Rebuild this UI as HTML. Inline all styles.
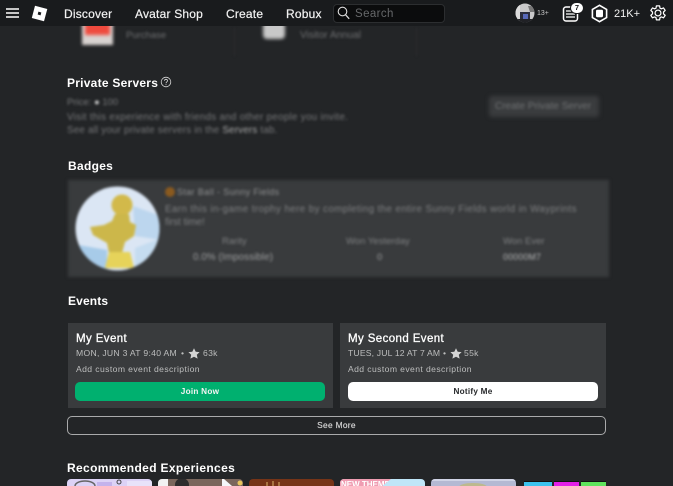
<!DOCTYPE html>
<html><head><meta charset="utf-8">
<style>
html,body{margin:0;padding:0;width:673px;height:486px;overflow:hidden;background:#232527;font-family:"Liberation Sans",sans-serif;color:#fff}
#p{position:relative;width:673px;height:486px;overflow:hidden}
.a{position:absolute;white-space:nowrap}
.nav{top:7px;font-size:12px;line-height:14px;font-weight:400;letter-spacing:.2px;color:#f2f2f2;-webkit-text-stroke:.2px #f2f2f2}
.h{font-weight:700;font-size:12px;line-height:15px;color:#fff}
.b{filter:blur(1.3px);color:#8a8b8c;font-size:9.5px;line-height:11px}
.card{background:#393b3d;top:323px;height:85px}
.t{font-size:11.5px;line-height:14px;letter-spacing:.4px;color:#fff;-webkit-text-stroke:.3px #fff}
.m{font-size:8.6px;line-height:11px;letter-spacing:.3px;color:#bdbebe}
.btn{height:19px;border-radius:5px;text-align:center;font-size:8.2px;line-height:19px;font-weight:700;letter-spacing:.25px}
.th{top:479px;height:7px;overflow:hidden;border-radius:4px 4px 0 0}
</style></head><body><div id="p">

<!-- blurred top cards -->
<div class="a" style="left:82px;top:20px;width:31px;height:25px;background:#d8d2d0;filter:blur(1.6px)"></div>
<div class="a" style="left:85px;top:22px;width:25px;height:13px;background:#ef4a3e;filter:blur(1.8px)"></div>
<div class="a" style="left:263px;top:22px;width:22px;height:17px;background:#c8c8c8;border-radius:4px;filter:blur(1.8px)"></div>
<div class="a b" style="left:126px;top:30px;color:#6e6f71">Purchase</div>
<div class="a b" style="left:300px;top:30px;color:#6e6f71;font-size:10px">Visitor Annual</div>
<div class="a" style="left:234px;top:28px;width:1px;height:28px;background:#2b2d2f;filter:blur(1px)"></div>
<div class="a" style="left:416px;top:28px;width:1px;height:28px;background:#2b2d2f;filter:blur(1px)"></div>

<!-- header -->
<div class="a" style="left:0;top:0;width:673px;height:26px;background:#191b1d"></div>
<svg class="a" style="left:6px;top:8px" width="13" height="10" viewBox="0 0 13 10"><path d="M0 1h13M0 5h13M0 9h13" stroke="#fff" stroke-width="1.6"/></svg>
<svg class="a" style="left:31px;top:5px" width="17" height="17" viewBox="0 0 17 17"><path d="M4 .8 16.300 4 13 16.300.8 13z" fill="#fff"/><rect x="7" y="7" width="3" height="3" fill="#191b1d" transform="rotate(15 8.500 8.500)"/></svg>
<div class="a nav" style="left:64px">Discover</div>
<div class="a nav" style="left:135px">Avatar Shop</div>
<div class="a nav" style="left:226px">Create</div>
<div class="a nav" style="left:286px">Robux</div>
<div class="a" style="left:333px;top:4px;width:110px;height:17px;background:#0b0c0d;border:1px solid #2c2e30;border-radius:4px"></div>
<svg class="a" style="left:337px;top:6px" width="13" height="14" viewBox="0 0 13 14"><circle cx="5.500" cy="5.500" r="4.300" fill="none" stroke="#dcdcdc" stroke-width="1.100"/><path d="M8.600 8.800 12.200 12.800" stroke="#dcdcdc" stroke-width="1.200"/></svg>
<div class="a" style="left:355px;top:7px;font-size:11.500px;line-height:14px;letter-spacing:.4px;color:#66686a">Search</div>
<svg class="a" style="left:515px;top:3px" width="20" height="20" viewBox="0 0 20 20"><defs><clipPath id="c"><circle cx="10" cy="10" r="9.500"/></clipPath></defs><g clip-path="url(#c)"><rect width="20" height="20" fill="#c9c9ca"/><rect x="0" y="0" width="5" height="20" fill="#dcdcdc"/><path d="M5 9h10v11H5z" fill="#2a2c3c"/><rect x="8" y="11" width="5" height="6" fill="#5768b8"/><path d="M13 3h7v6h-5z" fill="#777"/><path d="M3 16h17v4H3z" fill="#202125"/></g></svg>
<div class="a" style="left:537px;top:9px;font-size:7px;line-height:9px;color:#c9c9c9">13+</div>
<svg class="a" style="left:562px;top:5px" width="17" height="17" viewBox="0 0 17 17"><rect x="1.500" y="2" width="14" height="14" rx="2.500" fill="none" stroke="#fff" stroke-width="1.500"/><path d="M4 6h9M4 9h9M4 12h9" stroke="#fff" stroke-width="1.300"/></svg>
<div class="a" style="left:570px;top:2px;width:12px;height:10px;border-radius:6px;background:#fff;color:#191b1d;font-size:7.500px;line-height:10px;font-weight:700;text-align:center;border:1px solid #191b1d">7</div>
<svg class="a" style="left:591px;top:4px" width="17" height="19" viewBox="0 0 17 19"><path d="M8.500 1.300 15.600 5.400v8.200L8.500 17.700 1.400 13.600V5.400z" fill="none" stroke="#fff" stroke-width="1.600"/><rect x="5" y="5.800" width="7" height="7.400" rx="1.200" fill="#fff"/></svg>
<div class="a" style="left:614px;top:7px;font-size:11px;line-height:14px;letter-spacing:0;color:#f2f2f2">21K+</div>
<svg class="a" style="left:649px;top:4px" width="18" height="18" viewBox="0 0 16 16"><path d="M6.600.8h2.800l.4 2 1.200.6 1.900-.8 1.500 2.200-1.500 1.400v1.600l1.500 1.400-1.500 2.200-1.900-.8-1.200.6-.4 2H6.600l-.4-2-1.200-.6-1.900.8-1.500-2.200 1.500-1.400V6.200L1.600 4.800l1.500-2.200 1.900.8 1.200-.6z" fill="none" stroke="#fff" stroke-width="1.100" stroke-linejoin="round" transform="translate(0 .9)"/><circle cx="8" cy="8" r="2.600" fill="none" stroke="#fff" stroke-width="1.100"/></svg>

<!-- private servers -->
<div class="a h" style="left:67px;top:76px;letter-spacing:.25px">Private Servers</div>
<svg class="a" style="left:160px;top:76px" width="12" height="12" viewBox="0 0 12 12"><circle cx="6" cy="6" r="4.800" fill="none" stroke="#d8d8d8" stroke-width=".8"/><path d="M4.500 4.800c0-2 3-2 3 0 0 1.100-1.500 1.200-1.500 2.400" fill="none" stroke="#d8d8d8" stroke-width=".8"/><circle cx="6" cy="8.600" r=".5" fill="#d8d8d8"/></svg>
<div class="a b" style="left:67px;top:97px;color:#77787a">Price: <span style="color:#c4c4c4">&#9679;</span> 100</div>
<div class="a b" style="left:67px;top:112px;color:#77787a;font-size:9.800px;letter-spacing:.3px">Visit this experience with friends and other people you invite.</div>
<div class="a b" style="left:67px;top:125px;color:#77787a;font-size:9.800px;letter-spacing:.2px">See all your private servers in the <span style="color:#aaa">Servers</span> tab.</div>
<div class="a" style="left:489px;top:96px;width:110px;height:21px;background:#3a3c3e;border-radius:3px;filter:blur(2px)"></div>
<div class="a b" style="left:495px;top:101px;color:#707274;font-size:10px">Create Private Server</div>

<!-- badges -->
<div class="a h" style="left:68px;top:159px;letter-spacing:.3px">Badges</div>
<div class="a" style="left:68px;top:180px;width:541px;height:97px;background:#393b3d;filter:blur(1.500px)"></div>
<svg class="a" style="left:73px;top:186px;filter:blur(1.400px)" width="88" height="88" viewBox="0 0 88 88"><defs><clipPath id="d"><circle cx="44.500" cy="42.500" r="42"/></clipPath></defs><g clip-path="url(#d)"><rect width="88" height="88" fill="#dbe6f4"/><path d="M0 58 34 64v24H0z" fill="#a7cbe9"/><path d="M60 20 88 30v24L62 50z" fill="#bcd6ee"/><path d="M62 62 88 52v36H62z" fill="#c5dcf0"/><circle cx="49" cy="19" r="10.500" fill="#d2b94a"/><path d="M42 28h14l1 8 6 3-2 11-9 6-3 11H36l-2-10-14-8-3-8 14-2 8-4z" fill="#ccb74a"/><path d="M36 66h21l4 16H32z" fill="#e6d35a"/></g></svg>
<div class="a" style="left:165px;top:187px;width:10px;height:10px;border-radius:5px;background:#8a5a1f;filter:blur(1.300px)"></div>
<div class="a b" style="left:177px;top:187px;font-size:9px;color:#909192;letter-spacing:.35px">Star Ball - Sunny Fields</div>
<div class="a b" style="left:165px;top:204px;font-size:9.800px;color:#7f8082;letter-spacing:.4px">Earn this in-game trophy here by completing the entire Sunny Fields world in Wayprints</div>
<div class="a b" style="left:165px;top:217px;font-size:9.800px;color:#7f8082">first time!</div>
<div class="a b" style="left:222px;top:236px;color:#7f8082">Rarity</div>
<div class="a b" style="left:193px;top:252px;color:#9d9e9f;font-size:9.800px;letter-spacing:.1px">0.0% (Impossible)</div>
<div class="a b" style="left:346px;top:236px;color:#7f8082">Won Yesterday</div>
<div class="a b" style="left:377px;top:252px;color:#9d9e9f">0</div>
<div class="a b" style="left:503px;top:236px;color:#7f8082">Won Ever</div>
<div class="a b" style="left:503px;top:252px;color:#b4b5b6;font-size:8.800px;letter-spacing:.2px">00000M7</div>

<!-- events -->
<div class="a h" style="left:68px;top:294px;letter-spacing:.15px">Events</div>

<div class="a card" style="left:68px;width:265px"></div>
<div class="a t" style="left:76px;top:332px">My Event</div>
<div class="a m" style="left:76px;top:348px">MON, JUN 3 AT 9:40 AM</div>
<div class="a m" style="left:181px;top:348px">&#8226;</div>
<svg class="a" style="left:188px;top:348px" width="12" height="11" viewBox="0 0 12 11"><path d="M6 .3 7.700 3.700l3.900.4-2.800 2.600.8 3.900L6 8.800 2.400 10.600l.8-3.900L.4 4.100l3.900-.4z" fill="#d4d4d4"/></svg>
<div class="a m" style="left:203px;top:348px">63k</div>
<div class="a m" style="left:76px;top:364px;letter-spacing:.4px">Add custom event description</div>
<div class="a btn" style="left:75px;top:382px;width:250px;background:#00b06f;color:#f4f4f4">Join Now</div>

<div class="a card" style="left:340px;width:266px"></div>
<div class="a t" style="left:348px;top:332px">My Second Event</div>
<div class="a m" style="left:348px;top:348px;letter-spacing:.18px">TUES, JUL 12 AT 7 AM</div>
<div class="a m" style="left:443px;top:348px">&#8226;</div>
<svg class="a" style="left:450px;top:348px" width="12" height="11" viewBox="0 0 12 11"><path d="M6 .3 7.700 3.700l3.900.4-2.800 2.600.8 3.900L6 8.800 2.400 10.600l.8-3.900L.4 4.100l3.900-.4z" fill="#d4d4d4"/></svg>
<div class="a m" style="left:464px;top:348px">55k</div>
<div class="a m" style="left:348px;top:364px;letter-spacing:.4px">Add custom event description</div>
<div class="a btn" style="left:348px;top:382px;width:250px;background:#fff;color:#26282a">Notify Me</div>

<div class="a" style="left:67px;top:416px;width:537px;height:17px;border:1px solid #a9aaab;border-radius:5px;text-align:center;font-size:8.400px;line-height:17px;letter-spacing:.3px;color:#d6d6d6;-webkit-text-stroke:.15px #d6d6d6">See More</div>

<!-- recommended -->
<div class="a h" style="left:67px;top:461px;letter-spacing:.35px">Recommended Experiences</div>
<div class="a th" style="left:67px;width:85px;background:#dcd2f6"><svg width="85" height="7" style="display:block"><path d="M8 7a10 5 0 0 1 20 0" fill="none" stroke="#666" stroke-width="1.500"/><circle cx="52" cy="3" r="2" fill="none" stroke="#444"/><rect x="30" y="3" width="15" height="4" fill="#c4b3ec"/><rect x="60" y="2" width="25" height="5" fill="#e8e2fa"/></svg></div>
<div class="a th" style="left:158px;width:85px;background:#7a665c"><svg width="85" height="7" style="display:block"><rect width="10" height="7" fill="#f2f2f2"/><circle cx="24" cy="6" r="7" fill="#2d2c2d"/><path d="M64 0h2l8 7H64z" fill="#f5f7fa"/><circle cx="82" cy="4" r="2.500" fill="#e8c45c"/></svg></div>
<div class="a th" style="left:249px;width:85px;background:#763417"><svg width="85" height="7" style="display:block"><path d="M18 7V3M24 7V2M30 7V3" stroke="#b98a50" stroke-width="1.500"/></svg></div>
<div class="a th" style="left:340px;width:85px;background:#bfe6f8"><div style="position:absolute;left:0;top:0;width:50px;height:7px;background:#ef9db2;clip-path:polygon(0 0,100% 0,78% 100%,0 100%);font-size:8px;line-height:8px;padding-top:2px;font-weight:700;color:#fff;white-space:nowrap;padding-left:1px">NEW THEME</div></div>
<div class="a th" style="left:431px;width:85px;background:#b4b9d3"><svg width="85" height="7" style="display:block"><rect y="0" width="85" height="2" fill="#d0d4e6"/><ellipse cx="42" cy="8" rx="14" ry="4" fill="#bdb98e"/></svg></div>
<div class="a" style="left:524px;top:481px;width:28px;height:5px;background:#3cc3ee;border-top:1px solid #111"></div>
<div class="a" style="left:554px;top:481px;width:25px;height:5px;background:#e31fe8;border-top:1px solid #111"></div>
<div class="a" style="left:581px;top:481px;width:25px;height:5px;background:#5fe35c;border-top:1px solid #111"></div>
</div></body></html>
